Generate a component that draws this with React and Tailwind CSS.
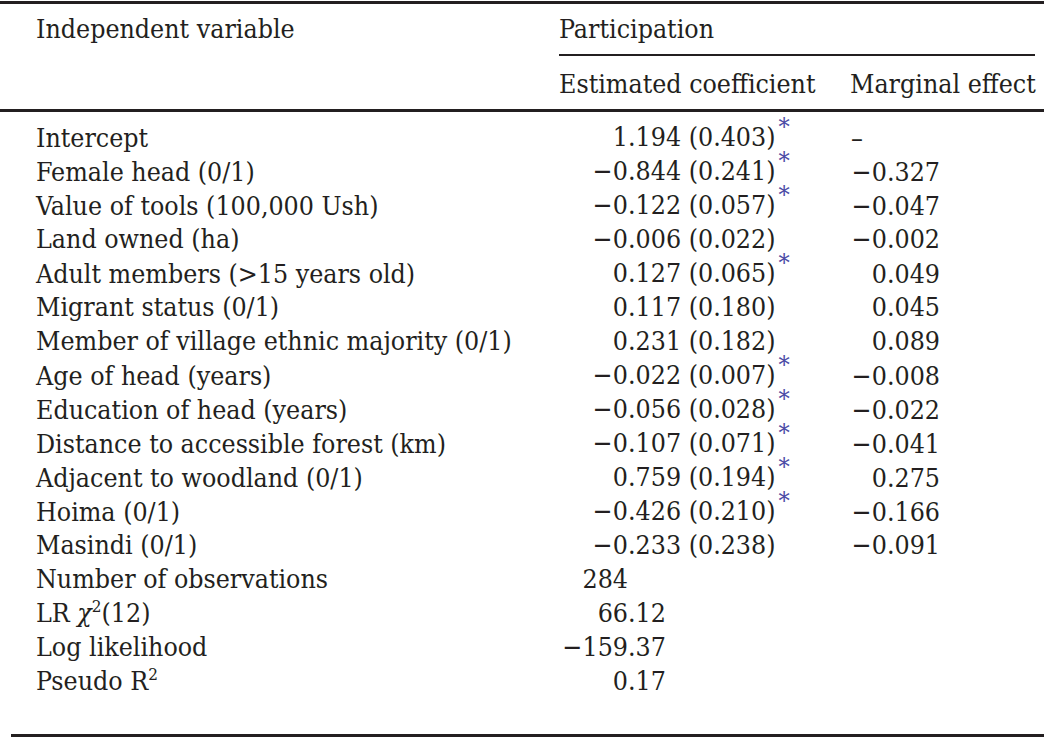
import React from 'react'

// rows: label, coefficient, standard error, significant, marginal effect
const rows = [
  ['Intercept', '1.194', '0.403', true, '–'],
  ['Female head (0/1)', '−0.844', '0.241', true, '−0.327'],
  ['Value of tools (100,000 Ush)', '−0.122', '0.057', true, '−0.047'],
  ['Land owned (ha)', '−0.006', '0.022', false, '−0.002'],
  ['Adult members (>15 years old)', '0.127', '0.065', true, '0.049'],
  ['Migrant status (0/1)', '0.117', '0.180', false, '0.045'],
  ['Member of village ethnic majority (0/1)', '0.231', '0.182', false, '0.089'],
  ['Age of head (years)', '−0.022', '0.007', true, '−0.008'],
  ['Education of head (years)', '−0.056', '0.028', true, '−0.022'],
  ['Distance to accessible forest (km)', '−0.107', '0.071', true, '−0.041'],
  ['Adjacent to woodland (0/1)', '0.759', '0.194', true, '0.275'],
  ['Hoima (0/1)', '−0.426', '0.210', true, '−0.166'],
  ['Masindi (0/1)', '−0.233', '0.238', false, '−0.091'],
]

const stats = [
  ['Number of observations', '284'],
  [<>LR <i>χ</i><sup className="text-[17px] relative -top-[10px]">2</sup>(12)</>, '66.12'],
  ['Log likelihood', '−159.37'],
  [<>Pseudo R<sup className="text-[17px] relative -top-[10px]">2</sup></>, '0.17'],
]

// splits a number on its decimal point so the column lines up like the print
const DecNum = ({ value, children }) => {
  const i = value.indexOf('.')
  const whole = i < 0 ? value : value.slice(0, i)
  const frac = i < 0 ? '' : value.slice(i)
  return (
    <div className="flex">
      <span className="w-[69px] text-right whitespace-nowrap">{whole}</span>
      <span className="whitespace-nowrap">{frac}{children}</span>
    </div>
  )
}

const Star = () => (
  <span className="relative -top-[11px] ml-[3px] text-[25px] text-[#4b4ba6]">*</span>
)

export default function App() {
  return (
    <div
      className="w-[1044px] h-[739px] bg-white text-[#231f20] text-[26.5px] leading-[34px] overflow-hidden"
      style={{ fontFamily: '"DejaVu Serif Condensed", "DejaVu Serif", serif' }}
    >
      <div className="mt-[1px] border-t-[3px] border-[#231f20]" />

      {/* header */}
      <div className="flex pl-[36px]">
        <div className="w-[523px] h-[50px] flex items-center whitespace-nowrap">Independent variable</div>
        <div className="w-[476px] flex flex-col">
          <div className="h-[50px] flex items-center">Participation</div>
          <div className="border-t-2 border-[#231f20]" />
          <div className="h-[53px] flex items-center pt-[3px] whitespace-nowrap">
            <div className="w-[291px] shrink-0">Estimated coefficient</div>
            <div className="shrink-0">Marginal effect</div>
          </div>
        </div>
      </div>
      <div className="border-t-[3px] border-[#231f20]" />

      {/* body */}
      <div className="pt-[8px] pb-[36px]">
        {rows.map(([label, coef, se, sig, me]) => (
          <div key={label} className="grid grid-cols-[523px_292px_1fr] pl-[36px] h-[34px] items-center">
            <div className="whitespace-nowrap">{label}</div>
            <DecNum value={coef}>
              {' '}({se}){sig && <Star />}
            </DecNum>
            {me === '–' ? (
              <div>–</div>
            ) : (
              <div className="w-[89px] text-right whitespace-nowrap">{me}</div>
            )}
          </div>
        ))}
        {stats.map(([label, val], i) => (
          <div key={i} className="grid grid-cols-[523px_292px_1fr] pl-[36px] h-[34px] items-center">
            <div className="whitespace-nowrap">{label}</div>
            <DecNum value={val} />
            <div />
          </div>
        ))}
      </div>
      <div className="ml-[11px] border-t-[3px] border-[#231f20]" />
    </div>
  )
}
